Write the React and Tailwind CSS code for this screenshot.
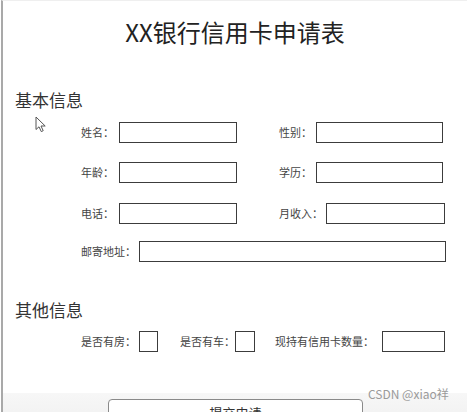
import React from "react";

const font = { fontFamily: '"Noto Sans CJK SC", "Noto Sans", sans-serif' };

function Label({ w, ml = "", children }) {
  return (
    <span className={`shrink-0 text-[11px] leading-[21px] text-[#444] ${w} ${ml}`}>
      {children}
    </span>
  );
}

function Box({ w }) {
  return <div className={`shrink-0 h-[21px] border border-[#3c3c3c] bg-white ${w}`} />;
}

export default function App() {
  return (
    <div
      className="relative w-[467px] h-[412px] overflow-hidden bg-white"
      style={font}
    >
      <div className="ml-[1px] h-full border-l-2 border-[#a9a9a9] border-t border-t-[#efefef] flex flex-col">
        <div className="pt-[15px] h-[47px] text-center text-[24px] leading-[32px] text-[#222]">
          XX银行信用卡申请表
        </div>

        <div className="mt-[40px] pl-[12px] text-[17px] leading-[24px] text-[#333]">
          基本信息
        </div>

        <div className="mt-[10px] pl-[78px] flex items-center">
          <Label w="w-[38px]">姓名：</Label>
          <Box w="w-[118px]" />
          <Label w="w-[37px]" ml="ml-[42px]">性别：</Label>
          <Box w="w-[127px]" />
        </div>

        <div className="mt-[19px] pl-[78px] flex items-center">
          <Label w="w-[38px]">年龄：</Label>
          <Box w="w-[118px]" />
          <Label w="w-[37px]" ml="ml-[42px]">学历：</Label>
          <Box w="w-[127px]" />
        </div>

        <div className="mt-[20px] pl-[78px] flex items-center">
          <Label w="w-[38px]">电话：</Label>
          <Box w="w-[118px]" />
          <Label w="w-[47px]" ml="ml-[42px]">月收入：</Label>
          <Box w="w-[119px]" />
        </div>

        <div className="mt-[17px] pl-[78px] flex items-center">
          <Label w="w-[58px]">邮寄地址：</Label>
          <Box w="w-[307px]" />
        </div>

        <div className="mt-[36px] pl-[12px] text-[17px] leading-[24px] text-[#333]">
          其他信息
        </div>

        <div className="mt-[9px] pl-[78px] flex items-center">
          <Label w="w-[58px]">是否有房：</Label>
          <Box w="w-[19px]" />
          <Label w="w-[55px]" ml="ml-[22px]">是否有车：</Label>
          <Box w="w-[20px]" />
          <Label w="w-[107px]" ml="ml-[20px]">现持有信用卡数量：</Label>
          <Box w="w-[63px]" />
        </div>

        <div className="mt-[41px] flex-1 bg-gradient-to-b from-[#f7f7f7] to-[#efefef] pt-[6px] pl-[105px]">
          <div className="w-[255px] h-[30px] rounded-[4px] border border-[#8a8a8a] bg-white text-center text-[13px] leading-[26px] text-[#333]">
            提交申请
          </div>
        </div>
      </div>

      <svg
        className="absolute left-[35px] top-[116px]"
        width="12"
        height="17"
        viewBox="0 0 12 17"
      >
        <path
          d="M1 1 L1 13.5 L4 10.8 L6.3 15.6 L8.2 14.7 L6 10 L10.2 10 Z"
          fill="#fff"
          stroke="#555"
          strokeWidth="1"
          strokeLinejoin="round"
        />
      </svg>

      <div className="absolute left-[368px] top-[386px] text-[12px] leading-[16px] text-[#9a9a9a]">
        CSDN @xiao祥
      </div>
    </div>
  );
}
